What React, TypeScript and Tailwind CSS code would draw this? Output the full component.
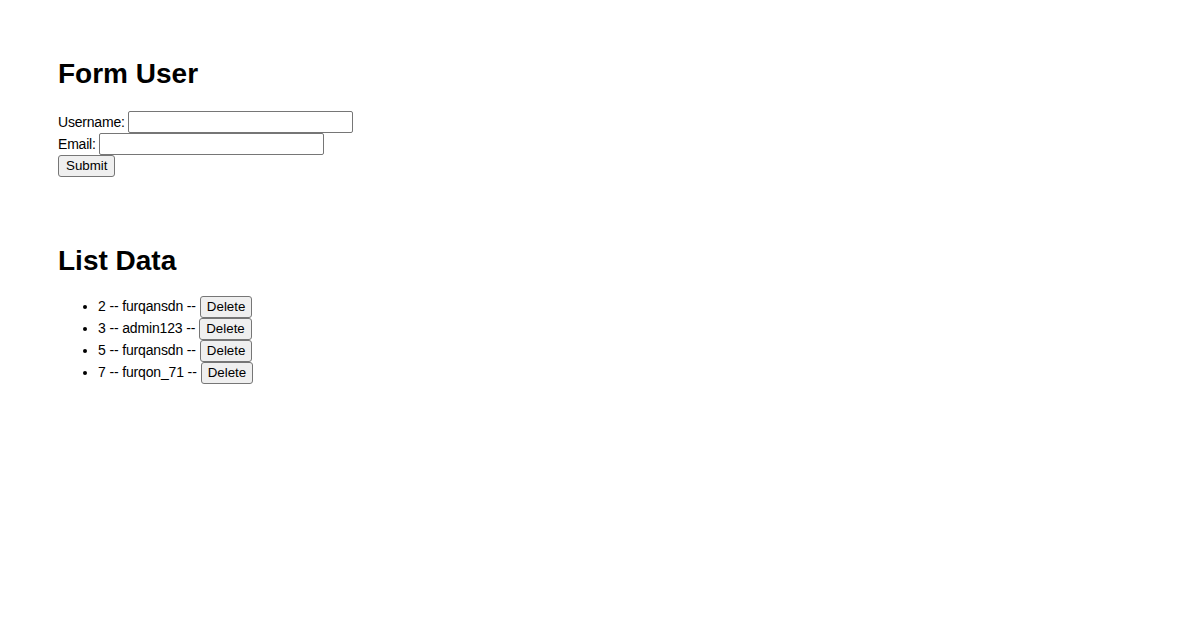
import React, { useState } from 'react';

interface User {
  id: number;
  username: string;
}

const initialUsers: User[] = [
  { id: 2, username: 'furqansdn' },
  { id: 3, username: 'admin123' },
  { id: 5, username: 'furqansdn' },
  { id: 7, username: 'furqon_71' },
];

const inputClass =
  'h-[22px] w-[225px] border border-[#767676] rounded-[2px] bg-white px-[2px] text-[13.33px] outline-none';

const buttonClass =
  'h-[22px] border border-[#767676] rounded-[3px] bg-[#efefef] text-[13.33px] leading-none text-black tracking-normal';

export default function App() {
  const [users, setUsers] = useState<User[]>(initialUsers);
  const [username, setUsername] = useState('');
  const [email, setEmail] = useState('');

  const handleSubmit = (e: React.FormEvent) => {
    e.preventDefault();
  };

  return (
    <div
      className="min-h-screen bg-white pl-[58px] pt-[58px] text-[14px] text-black"
      style={{ fontFamily: '"Liberation Sans", Arial, sans-serif' }}
    >
      <h1 className="text-[28px] font-bold leading-[32px]">Form User</h1>
      <form onSubmit={handleSubmit} className="mt-[21px] flex flex-col tracking-[-0.2px]">
        <label className="flex h-[22px] items-center gap-[3px] leading-[16px]">
          Username:
          <input
            className={inputClass}
            value={username}
            onChange={(e) => setUsername(e.target.value)}
          />
        </label>
        <label className="flex h-[22px] items-center gap-[3px] leading-[16px]">
          Email:
          <input
            className={inputClass}
            value={email}
            onChange={(e) => setEmail(e.target.value)}
          />
        </label>
        <div className="flex h-[22px]">
          <button type="submit" className={`${buttonClass} px-[7px]`}>
            Submit
          </button>
        </div>
      </form>

      <h1 className="mt-[68px] text-[28px] font-bold leading-[32px]">List Data</h1>
      <ul className="mt-[18px] list-disc pl-[40px] tracking-[-0.15px]">
        {users.map((u) => (
          <li key={u.id} className="h-[22px] leading-[22px]">
            <span className="mr-[4px]">
              {u.id} -- {u.username} --
            </span>
            <button
              className={`${buttonClass} px-[6px]`}
              onClick={() => setUsers(users.filter((x) => x.id !== u.id))}
            >
              Delete
            </button>
          </li>
        ))}
      </ul>
    </div>
  );
}
